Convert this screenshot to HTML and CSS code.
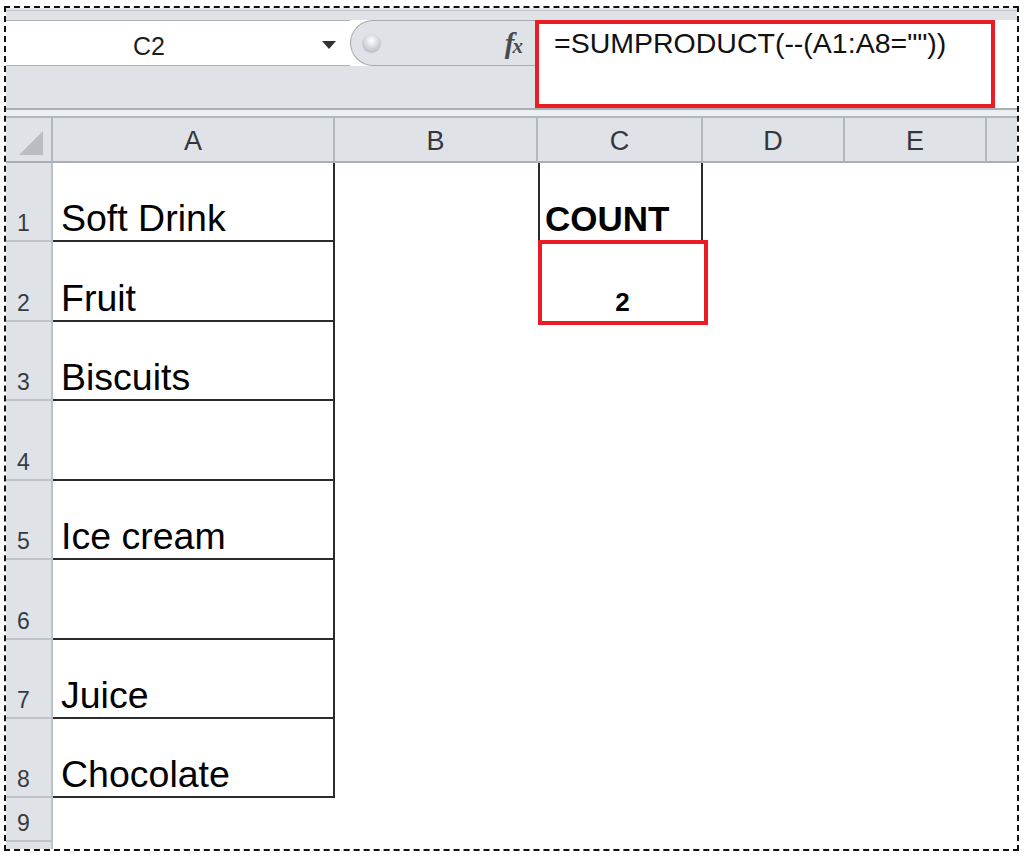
FILE: index.html
```html
<!DOCTYPE html>
<html>
<head>
<meta charset="utf-8">
<link rel="stylesheet" href="styles.css">
</head>
<body>
<div class="frame">
  <div class="strip"></div>
  <div class="fbar">
    <div class="fleft">
      <div class="namerow">
        <div class="namebox"><span class="ref">C2</span><span class="caret"></span></div>
        <div class="pill"><span class="knob"></span><span class="fx"><span class="fx-f">f</span><span class="fx-x">x</span></span></div>
      </div>
      <div class="fleft-fill"></div>
    </div>
    <div class="finput">
      <div class="fbox">=SUMPRODUCT(--(A1:A8=""))</div>
    </div>
  </div>
  <div class="sep"></div>
  <div class="sheet">
    <div class="hd corner"><svg width="45" height="43" viewBox="0 0 45 43"><polygon points="37,13 37,37 13,37" fill="#b9bdc2"/></svg></div>
    <div class="hd col">A</div>
    <div class="hd col">B</div>
    <div class="hd col">C</div>
    <div class="hd col">D</div>
    <div class="hd col">E</div>
    <div class="hd col last"></div>

    <div class="rn">1</div>
    <div class="cell ca">Soft Drink</div>
    <div class="cell"></div>
    <div class="cell cc1 bold">COUNT</div>
    <div class="cell"></div>
    <div class="cell"></div>
    <div class="cell"></div>

    <div class="rn">2</div>
    <div class="cell ca">Fruit</div>
    <div class="cell"></div>
    <div class="cell cc2"><span class="num">2</span></div>
    <div class="cell"></div>
    <div class="cell"></div>
    <div class="cell"></div>

    <div class="rn">3</div>
    <div class="cell ca">Biscuits</div>
    <div class="cell"></div>
    <div class="cell"></div>
    <div class="cell"></div>
    <div class="cell"></div>
    <div class="cell"></div>

    <div class="rn">4</div>
    <div class="cell ca"></div>
    <div class="cell"></div>
    <div class="cell"></div>
    <div class="cell"></div>
    <div class="cell"></div>
    <div class="cell"></div>

    <div class="rn">5</div>
    <div class="cell ca">Ice cream</div>
    <div class="cell"></div>
    <div class="cell"></div>
    <div class="cell"></div>
    <div class="cell"></div>
    <div class="cell"></div>

    <div class="rn">6</div>
    <div class="cell ca"></div>
    <div class="cell"></div>
    <div class="cell"></div>
    <div class="cell"></div>
    <div class="cell"></div>
    <div class="cell"></div>

    <div class="rn">7</div>
    <div class="cell ca">Juice</div>
    <div class="cell"></div>
    <div class="cell"></div>
    <div class="cell"></div>
    <div class="cell"></div>
    <div class="cell"></div>

    <div class="rn">8</div>
    <div class="cell ca">Chocolate</div>
    <div class="cell"></div>
    <div class="cell"></div>
    <div class="cell"></div>
    <div class="cell"></div>
    <div class="cell"></div>

    <div class="rn">9</div>
    <div class="cell"></div>
    <div class="cell"></div>
    <div class="cell"></div>
    <div class="cell"></div>
    <div class="cell"></div>
    <div class="cell"></div>

    <div class="rn stub"></div>
    <div class="cell stubc"></div>
    <div class="cell stubc"></div>
    <div class="cell stubc"></div>
    <div class="cell stubc"></div>
    <div class="cell stubc"></div>
    <div class="cell stubc"></div>
  </div>
</div>
</body>
</html>
```

FILE: styles.css
```css
* { box-sizing: border-box; }
html, body { margin: 0; padding: 0; background: #ffffff; }
body { font-family: "Liberation Sans", Arial, sans-serif; color: #111; }

.frame {
  margin: 6px 0 0 4px;
  width: 1015px;
  height: 845px;
  border: 2px dashed #111;
  display: flex;
  flex-direction: column;
  overflow: hidden;
}

.strip {
  height: 12px;
  flex: none;
  background: linear-gradient(#e4e7eb 0 2px, #c3c7cc 2px 3px, #dfe3e8 3px);
}

.fbar {
  height: 88px;
  flex: none;
  display: flex;
}
.fleft {
  width: 529px;
  flex: none;
  display: flex;
  flex-direction: column;
}
.namerow {
  height: 46px;
  display: flex;
  background: #ffffff;
}
.namebox {
  width: 344px;
  border-top: 1px solid #aeb3b8;
  border-bottom: 1px solid #aeb3b8;
  display: flex;
  align-items: flex-start;
}
.ref {
  font-size: 25px;
  line-height: 1;
  color: #1e1e1e;
  margin-left: 127px;
  margin-top: 13px;
}
.caret {
  width: 0;
  height: 0;
  border-left: 7px solid transparent;
  border-right: 7px solid transparent;
  border-top: 8px solid #333;
  margin-left: auto;
  margin-right: 14px;
  margin-top: 20px;
}
.pill {
  flex: 1;
  background: #dfe3e8;
  border: 1px solid #a5aaaf;
  border-right: none;
  border-radius: 23px 0 0 23px;
  display: flex;
  align-items: center;
}
.knob {
  width: 19px;
  height: 19px;
  border-radius: 50%;
  margin-left: 11px;
  background: radial-gradient(circle at 50% 35%, #ffffff 0, #d4d8dc 45%, #a9aeb4 100%);
}
.fx {
  margin-left: auto;
  margin-right: 12px;
  font-family: "Liberation Serif", "Times New Roman", serif;
  font-style: italic;
  font-weight: bold;
  color: #4a4a4a;
  line-height: 1;
  display: flex;
  align-items: baseline;
}
.fx-f { font-size: 29px; }
.fx-x { font-size: 21px; margin-left: -2px; }

.fleft-fill {
  flex: 1;
  background: #dfe3e8;
}
.finput {
  flex: 1;
  background: #ffffff;
  display: flex;
}
.fbox {
  width: 460px;
  height: 88px;
  border: 4px solid #ec1c24;
  font-size: 28.5px;
  line-height: 1;
  padding: 5px 0 0 15px;
  color: #111;
}

.sep {
  height: 10px;
  flex: none;
  background: linear-gradient(#a9aeb3 0 2px, #eceff3 2px 8px, #b3b8bd 8px 10px);
}

.sheet {
  flex: 1;
  display: grid;
  grid-template-columns: 47px 282px 203px 165px 142px 142px 1fr;
  grid-template-rows: 45px 79px 80px 79px 80px 79px 80px 79px 79px 44px 1fr;
}

.hd {
  background: #dfe3e8;
  border-right: 2px solid #b3b8bd;
  border-bottom: 2px solid #a9aeb3;
}
.hd.last { border-right: none; }
.corner { display: flex; }
.col {
  display: flex;
  justify-content: center;
  align-items: center;
  font-size: 27px;
  line-height: 1;
  color: #33373c;
  padding-top: 4px;
}

.rn {
  background: #dfe3e8;
  border-right: 2px solid #bcc1c6;
  border-bottom: 2px solid #bfc3c8;
  display: flex;
  align-items: flex-end;
  padding: 0 0 5px 11px;
  font-size: 23px;
  line-height: 1;
  color: #363b41;
}
.rn.stub { border-bottom: none; }

.cell {
  border-bottom: 2px solid transparent;
  display: flex;
  align-items: flex-end;
  font-size: 37.5px;
  line-height: 1;
  color: #000;
  padding: 0 0 3px 8px;
}
.cell.stubc { border-bottom: none; }
.ca {
  border-right: 2px solid #2b2b2b;
  border-bottom-color: #2b2b2b;
}
.cc1 {
  border-left: 2px solid #2b2b2b;
  border-right: 2px solid #2b2b2b;
  padding-left: 5px;
}
.bold {
  font-weight: bold;
  font-size: 35px;
  padding-bottom: 4px;
}
.cc2 {
  border-left: 2px solid #2b2b2b;
  position: relative;
  justify-content: center;
  padding: 0 0 5px 0;
  z-index: 2;
}
.cc2::after {
  content: "";
  position: absolute;
  left: -2px;
  top: -2px;
  right: -5px;
  bottom: -5px;
  border: 4px solid #ec1c24;
}
.num {
  font-size: 26px;
  font-weight: bold;
  margin-left: 2px;
}
```
